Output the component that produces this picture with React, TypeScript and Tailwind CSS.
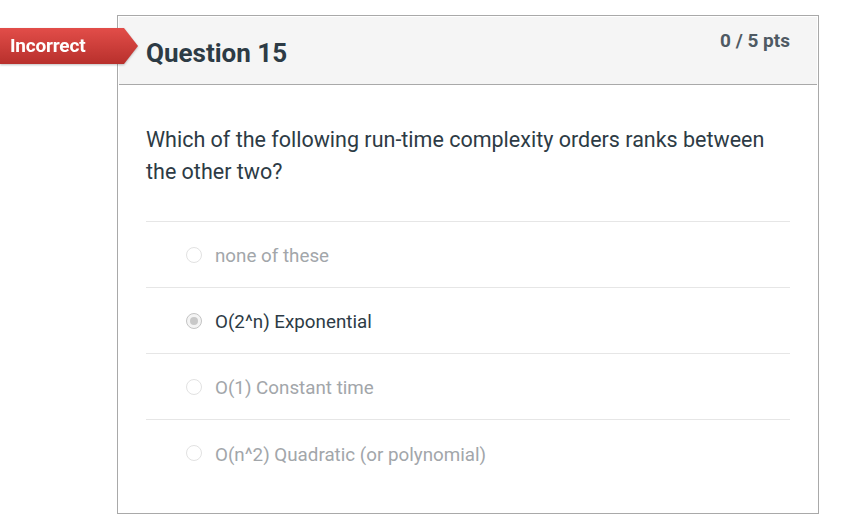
import React from 'react';

interface Answer {
  text: string;
  selected: boolean;
}

const answers: Answer[] = [
  { text: 'none of these', selected: false },
  { text: 'O(2^n) Exponential', selected: true },
  { text: 'O(1) Constant time', selected: false },
  { text: 'O(n^2) Quadratic (or polynomial)', selected: false },
];

const Radio: React.FC<{ checked: boolean }> = ({ checked }) => (
  <span
    className={`flex h-[16px] w-[16px] items-center justify-center rounded-full border ${
      checked ? 'border-[#c4c4c4] bg-[#f4f4f4]' : 'border-[#e2e2e2] bg-white'
    }`}
  >
    {checked && <span className="h-[8px] w-[8px] rounded-full bg-[#c8c8c8]" />}
  </span>
);

const App: React.FC = () => {
  return (
    <div className="relative min-h-[522px] bg-white pt-[15px] font-['Roboto',sans-serif]">
      {/* Result badge */}
      <div className="absolute left-0 top-[28px] flex h-[36px] drop-shadow-[0_1px_1px_rgba(0,0,0,0.25)]">
        <div className="flex w-[124px] items-center bg-gradient-to-b from-[#e24d49] to-[#b8302c] pl-[10px] text-[19px] font-bold tracking-[-0.2px] text-white">
          Incorrect
        </div>
        <svg width="14" height="36" viewBox="0 0 14 36" className="block">
          <defs>
            <linearGradient id="arrowGrad" x1="0" y1="0" x2="0" y2="1">
              <stop offset="0" stopColor="#e24d49" />
              <stop offset="1" stopColor="#b8302c" />
            </linearGradient>
          </defs>
          <polygon points="0,0 14,18 0,36" fill="url(#arrowGrad)" />
        </svg>
      </div>

      <div className="ml-[117px] w-[702px] border border-[#a9a9a9] p-px">
        {/* Header */}
        <div className="flex h-[68px] justify-between border-b border-[#a9a9a9] bg-[#f5f5f5] pl-[27px] pr-[27px]">
          <h2 className="pt-[20px] text-[26px] font-bold leading-[32px] text-[#2d3b45]">Question 15</h2>
          <div className="pt-[12px] text-[19px] font-bold leading-[24px] text-[#4f5a63]">0 / 5 pts</div>
        </div>

        {/* Body */}
        <div className="px-[27px] pb-[26px] pt-[39px]">
          <p className="text-[21.5px] leading-[32px] text-[#2d3b45]">
            Which of the following run-time complexity orders ranks between the other two?
          </p>
          <div className="mt-[33px] border-t border-[#e6e6e6]">
            {answers.map((a, i) => (
              <div
                key={a.text}
                className={`flex h-[66px] items-center gap-[13px] pl-[40px] ${
                  i < answers.length - 1 ? 'border-b border-[#e6e6e6]' : ''
                }`}
              >
                <Radio checked={a.selected} />
                <span
                  className={`pt-[4px] text-[18.8px] ${a.selected ? 'text-[#2d3b45]' : 'text-[#a2a6aa]'}`}
                >
                  {a.text}
                </span>
              </div>
            ))}
          </div>
        </div>
      </div>
    </div>
  );
};

export default App;
